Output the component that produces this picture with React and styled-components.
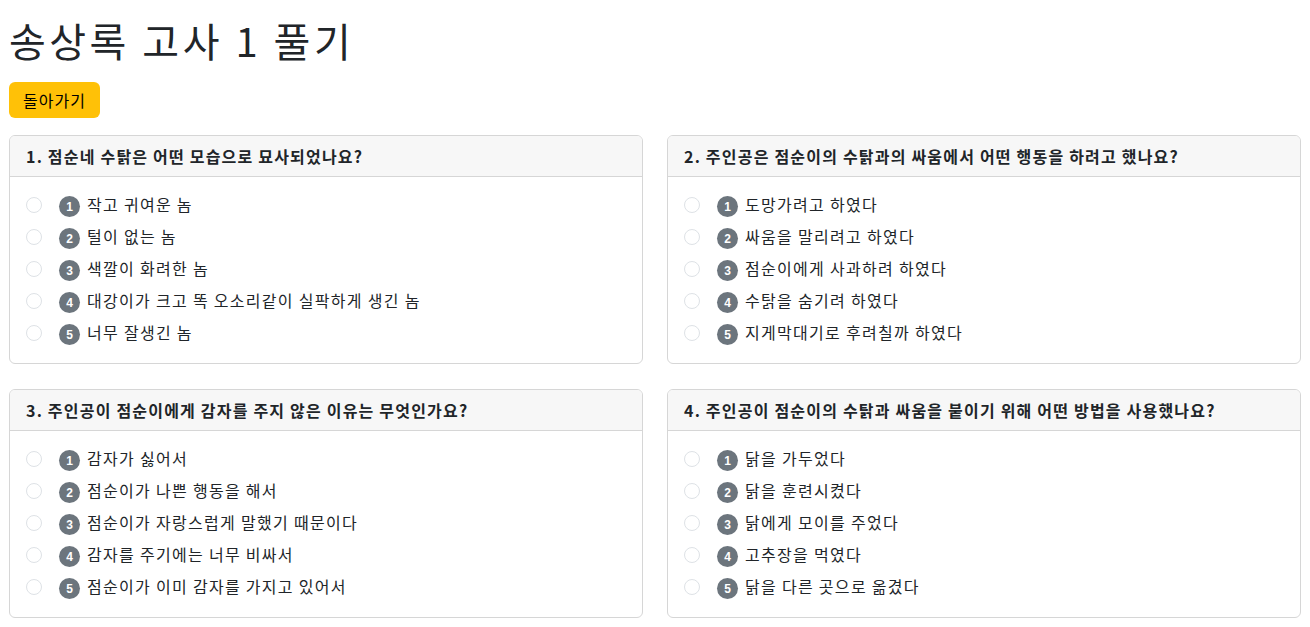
import React from 'react';
import styled, { createGlobalStyle } from 'styled-components';

const GlobalStyle = createGlobalStyle`
  * { box-sizing: border-box; }
  body {
    margin: 0;
    background: #fff;
    color: #212529;
    font-family: "Noto Sans CJK KR", "Noto Sans", sans-serif;
    font-size: 16px;
    line-height: 1.5;
  }
`;

const questions = [
  {
    title: '1. 점순네 수탉은 어떤 모습으로 묘사되었나요?',
    options: ['작고 귀여운 놈', '털이 없는 놈', '색깔이 화려한 놈', '대강이가 크고 똑 오소리같이 실팍하게 생긴 놈', '너무 잘생긴 놈'],
  },
  {
    title: '2. 주인공은 점순이의 수탉과의 싸움에서 어떤 행동을 하려고 했나요?',
    options: ['도망가려고 하였다', '싸움을 말리려고 하였다', '점순이에게 사과하려 하였다', '수탉을 숨기려 하였다', '지게막대기로 후려칠까 하였다'],
  },
  {
    title: '3. 주인공이 점순이에게 감자를 주지 않은 이유는 무엇인가요?',
    options: ['감자가 싫어서', '점순이가 나쁜 행동을 해서', '점순이가 자랑스럽게 말했기 때문이다', '감자를 주기에는 너무 비싸서', '점순이가 이미 감자를 가지고 있어서'],
  },
  {
    title: '4. 주인공이 점순이의 수탉과 싸움을 붙이기 위해 어떤 방법을 사용했나요?',
    options: ['닭을 가두었다', '닭을 훈련시켰다', '닭에게 모이를 주었다', '고추장을 먹였다', '닭을 다른 곳으로 옮겼다'],
  },
];

const Page = styled.div`
  padding: 16px 9px 10px;
`;

const Title = styled.h1`
  margin: 0 0 18px;
  font-size: 40px;
  font-weight: 400;
  line-height: 48px;
  letter-spacing: 3.5px;
  color: #212529;
`;

const BackButton = styled.button`
  display: block;
  height: 36px;
  padding: 0 14px;
  border: none;
  border-radius: 6px;
  background: #ffc107;
  color: #000;
  font-family: inherit;
  font-size: 16px;
  letter-spacing: 1px;
  line-height: 36px;
  cursor: pointer;
  margin-bottom: 17px;
`;

const Grid = styled.div`
  display: grid;
  grid-template-columns: 1fr 1fr;
  column-gap: 24px;
  row-gap: 25px;
`;

const Card = styled.div`
  border: 1px solid #d6d6d6;
  border-radius: 6px;
  overflow: hidden;
`;

const CardHeader = styled.div`
  padding: 8px 16px;
  background: #f7f7f7;
  border-bottom: 1px solid #d6d6d6;
  font-size: 16px;
  font-weight: 700;
  letter-spacing: 1.2px;
  line-height: 24px;
  white-space: nowrap;
`;

const CardBody = styled.div`
  padding: 14px 16px 18px;
  display: flex;
  flex-direction: column;
  gap: 6px;
`;

const Option = styled.label`
  display: flex;
  align-items: center;
  height: 26px;
  font-size: 16px;
  letter-spacing: 1.3px;
`;

const Radio = styled.span`
  width: 16px;
  height: 16px;
  border-radius: 50%;
  border: 1px solid #dee2e6;
  margin: 2px 17px 0 0;
  flex: none;
`;

const Badge = styled.span`
  width: 21px;
  height: 21px;
  border-radius: 50%;
  background: #6c757d;
  color: #fff;
  font-family: "Liberation Sans", Arial, sans-serif;
  font-size: 12px;
  font-weight: 700;
  letter-spacing: 0;
  display: flex;
  align-items: center;
  justify-content: center;
  margin: 5px 7px 0 0;
  flex: none;
`;

export default function App() {
  return (
    <Page>
      <GlobalStyle />
      <Title>송상록 고사 1 풀기</Title>
      <BackButton>돌아가기</BackButton>
      <Grid>
        {questions.map((q) => (
          <Card key={q.title}>
            <CardHeader>{q.title}</CardHeader>
            <CardBody>
              {q.options.map((opt, i) => (
                <Option key={opt}>
                  <Radio />
                  <Badge>{i + 1}</Badge>
                  {opt}
                </Option>
              ))}
            </CardBody>
          </Card>
        ))}
      </Grid>
    </Page>
  );
}
